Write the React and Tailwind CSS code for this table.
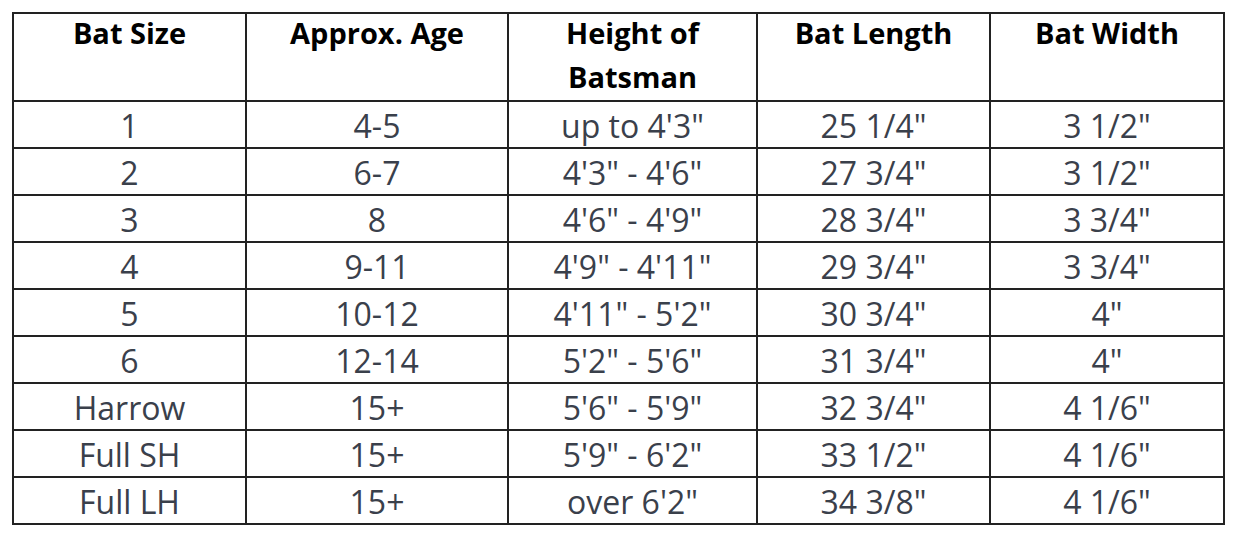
import React from 'react'

const rows = [
    ['1', '4-5', 'up to 4\'3"', '25 1/4"', '3 1/2"'],
    ['2', '6-7', '4\'3" - 4\'6"', '27 3/4"', '3 1/2"'],
    ['3', '8', '4\'6" - 4\'9"', '28 3/4"', '3 3/4"'],
    ['4', '9-11', '4\'9" - 4\'11"', '29 3/4"', '3 3/4"'],
    ['5', '10-12', '4\'11" - 5\'2"', '30 3/4"', '4"'],
    ['6', '12-14', '5\'2" - 5\'6"', '31 3/4"', '4"'],
    ['Harrow', '15+', '5\'6" - 5\'9"', '32 3/4"', '4 1/6"'],
    ['Full SH', '15+', '5\'9" - 6\'2"', '33 1/2"', '4 1/6"'],
    ['Full LH', '15+', 'over 6\'2"', '34 3/8"', '4 1/6"'],
]

const headers = [['Bat Size'], ['Approx. Age'], ['Height of', 'Batsman'], ['Bat Length'], ['Bat Width']]

const App = () => {
    return (
        <div className="w-[1240px] h-[540px] bg-white pt-3 pl-3 font-['Open_Sans',sans-serif]">
            <table className="table-fixed border-collapse w-[1211px]">
                <colgroup>
                    <col className="w-[233px]" />
                    <col className="w-[262px]" />
                    <col className="w-[249px]" />
                    <col className="w-[233px]" />
                    <col className="w-[234px]" />
                </colgroup>
                <thead>
                    <tr className="h-[88px]">
                        {headers.map((h) => (
                            <th
                                key={h[0]}
                                className="border-2 border-[#222] align-top p-0 text-[29px] leading-[44px] font-bold text-black whitespace-nowrap"
                            >
                                <div className="-mt-[3px] flex flex-col items-center">
                                    {h.map((line) => (
                                        <span key={line}>{line}</span>
                                    ))}
                                </div>
                            </th>
                        ))}
                    </tr>
                </thead>
                <tbody>
                    {rows.map((r) => (
                        <tr key={r[0]} className="h-[47px]">
                            {r.map((c, i) => (
                                <td
                                    key={i}
                                    className="border-2 border-[#222] p-0 text-center text-[32px] leading-[40px] pt-[2px] text-[#3a404b] whitespace-nowrap"
                                >
                                    {c}
                                </td>
                            ))}
                        </tr>
                    ))}
                </tbody>
            </table>
        </div>
    )
}

export default App
